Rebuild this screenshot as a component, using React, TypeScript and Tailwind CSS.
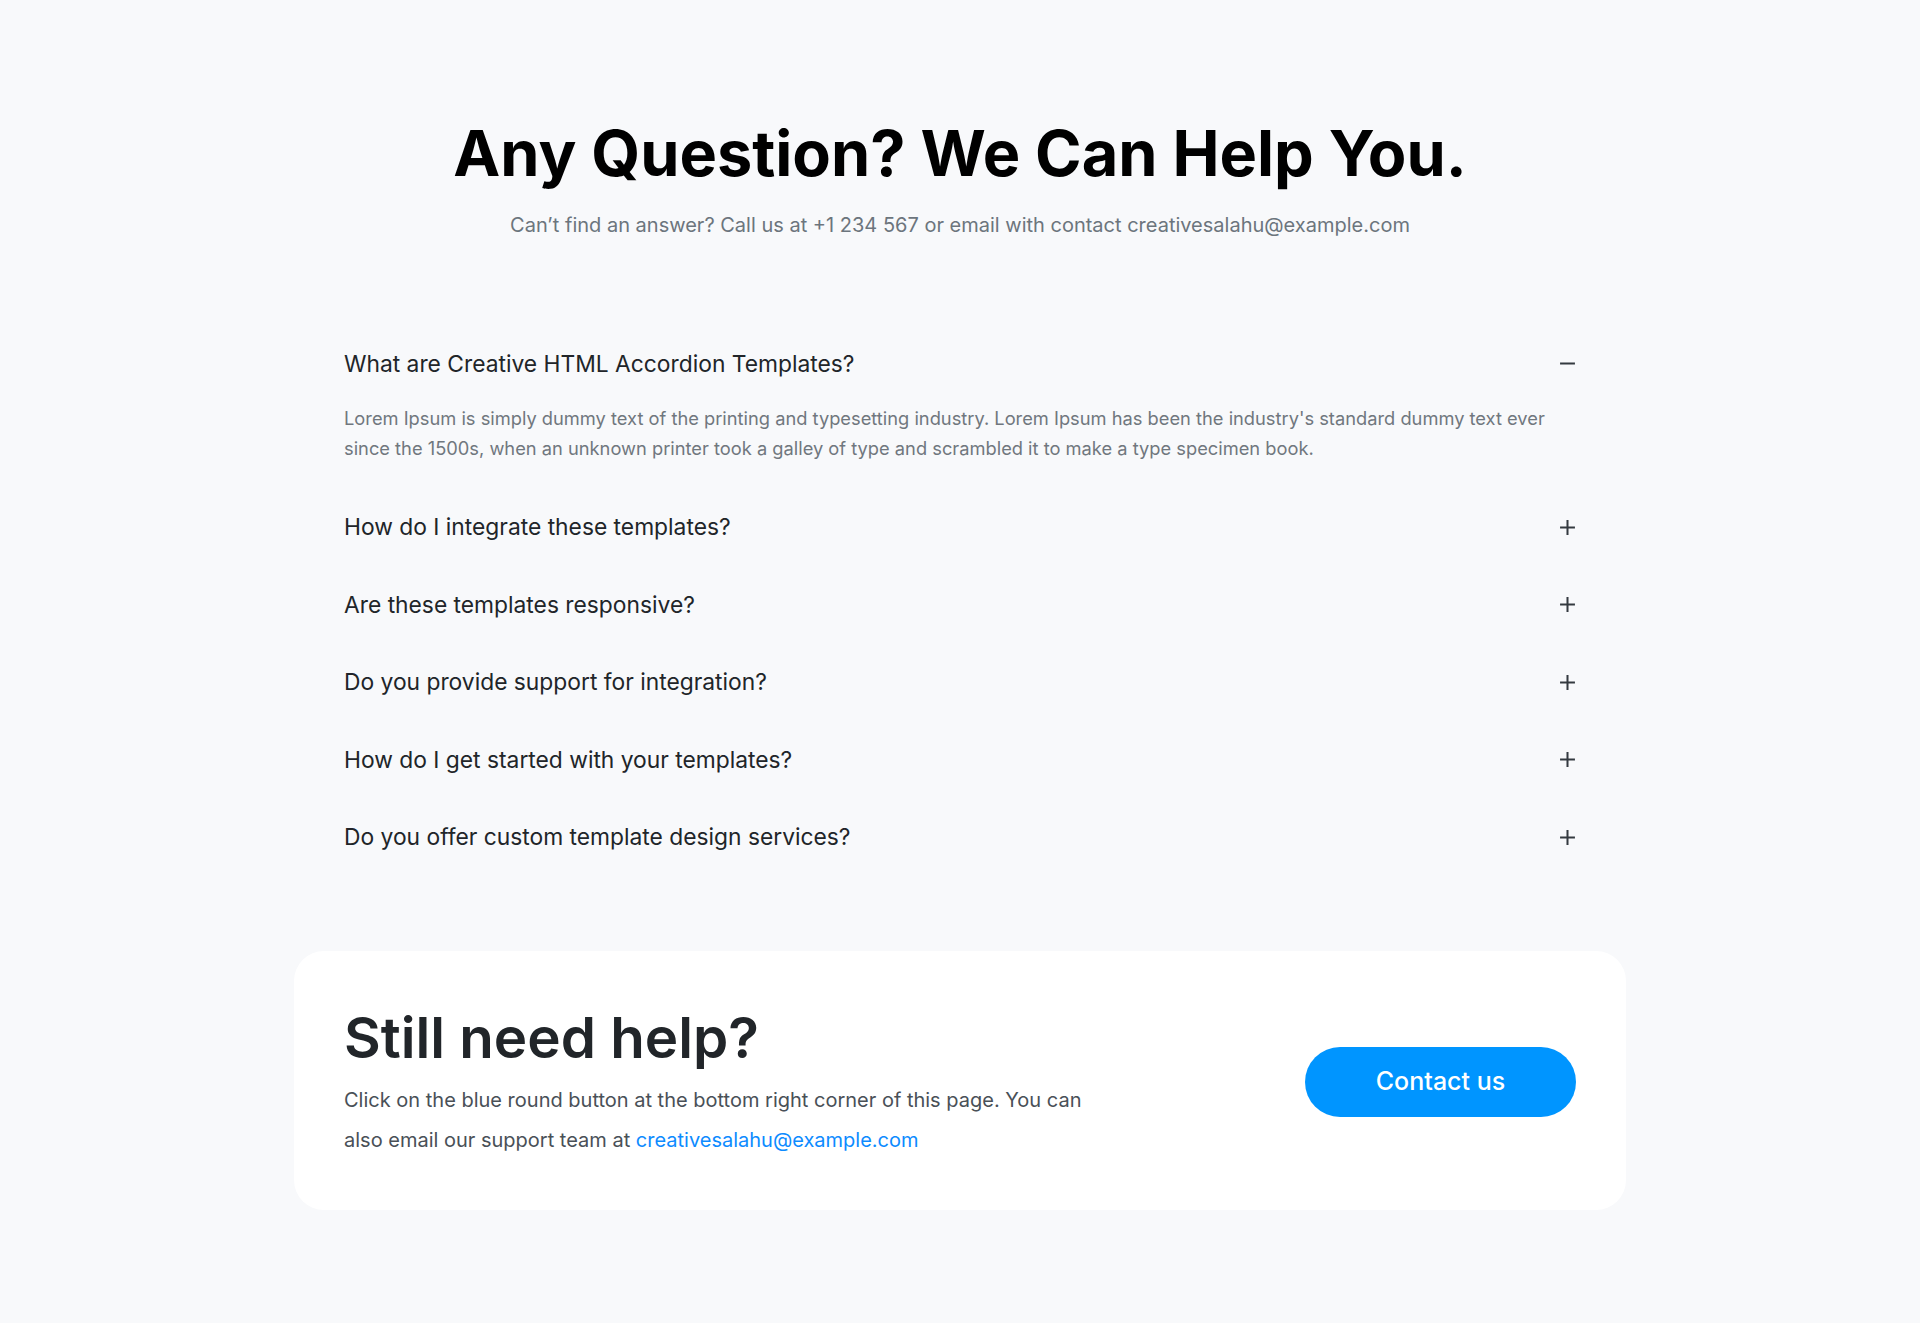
import { useState } from "react";

const faqs = [
  {
    q: "What are Creative HTML Accordion Templates?",
    a: "Lorem Ipsum is simply dummy text of the printing and typesetting industry. Lorem Ipsum has been the industry's standard dummy text ever since the 1500s, when an unknown printer took a galley of type and scrambled it to make a type specimen book.",
  },
  {
    q: "How do I integrate these templates?",
    a: "Copy the markup and styles into your project, then adjust the content and colours to suit your design.",
  },
  {
    q: "Are these templates responsive?",
    a: "Yes. Every template adapts to phones, tablets and desktop screens out of the box.",
  },
  {
    q: "Do you provide support for integration?",
    a: "Our support team is happy to help you get the templates running in your project.",
  },
  {
    q: "How do I get started with your templates?",
    a: "Pick a template, download it and follow the short guide that comes with it.",
  },
  {
    q: "Do you offer custom template design services?",
    a: "Yes, get in touch and we will design a template around your needs.",
  },
];

const PlusIcon = () => (
  <svg width="17" height="17" viewBox="0 0 16 16" fill="none" stroke="#343a40" strokeWidth="1.9">
    <path d="M8 1v14M1 8h14" />
  </svg>
);

const MinusIcon = () => (
  <svg width="17" height="17" viewBox="0 0 16 16" fill="none" stroke="#343a40" strokeWidth="1.9">
    <path d="M1 8h14" />
  </svg>
);

export default function App() {
  const [open, setOpen] = useState<number | null>(0);

  return (
    <div className="min-h-screen bg-[#f8f9fb] font-['Inter',sans-serif]">
      <section className="mx-auto w-[1332px] pt-[117px] pb-[100px]">
        <h1 className="text-center text-[63px] font-bold leading-[72px] text-black">
          Any Question? We Can Help You.
        </h1>
        <p className="mt-[22px] text-center text-[20px] leading-[28px] text-[#6c757d]">
          Can’t find an answer? Call us at +1 234 567 or email with contact creativesalahu@example.com
        </p>

        {/* Accordion */}
        <div className="mt-[86px] px-[50px]">
          {faqs.map((item, i) => (
            <div key={item.q}>
              <button
                className="flex h-[77.5px] w-full items-center justify-between text-left"
                onClick={() => setOpen(open === i ? null : i)}
              >
                <span className="text-[22.8px] text-[#212529]">{item.q}</span>
                {open === i ? <MinusIcon /> : <PlusIcon />}
              </button>
              {open === i && (
                <p className="pb-[26px] text-[18.3px] leading-[30px] text-[#70777e]">{item.a}</p>
              )}
            </div>
          ))}
        </div>

        {/* Help card */}
        <div className="mt-[75px] flex items-center justify-between rounded-[30px] bg-white px-[50px] pt-[53px] pb-[50px]">
          <div className="max-w-[770px]">
            <h2 className="text-[56.5px] font-semibold leading-[67px] text-[#212529]">Still need help?</h2>
            <p className="mt-[9px] text-[20px] leading-[40px] text-[#495057]">
              Click on the blue round button at the bottom right corner of this page. You can also email our
              support team at{" "}
              <a href="#" className="text-[#0d8bff]">
                creativesalahu@example.com
              </a>
            </p>
          </div>
          <button className="h-[70px] w-[271px] rounded-full bg-[#0095ff] text-[25px] font-medium text-white">
            Contact us
          </button>
        </div>
      </section>
    </div>
  );
}
